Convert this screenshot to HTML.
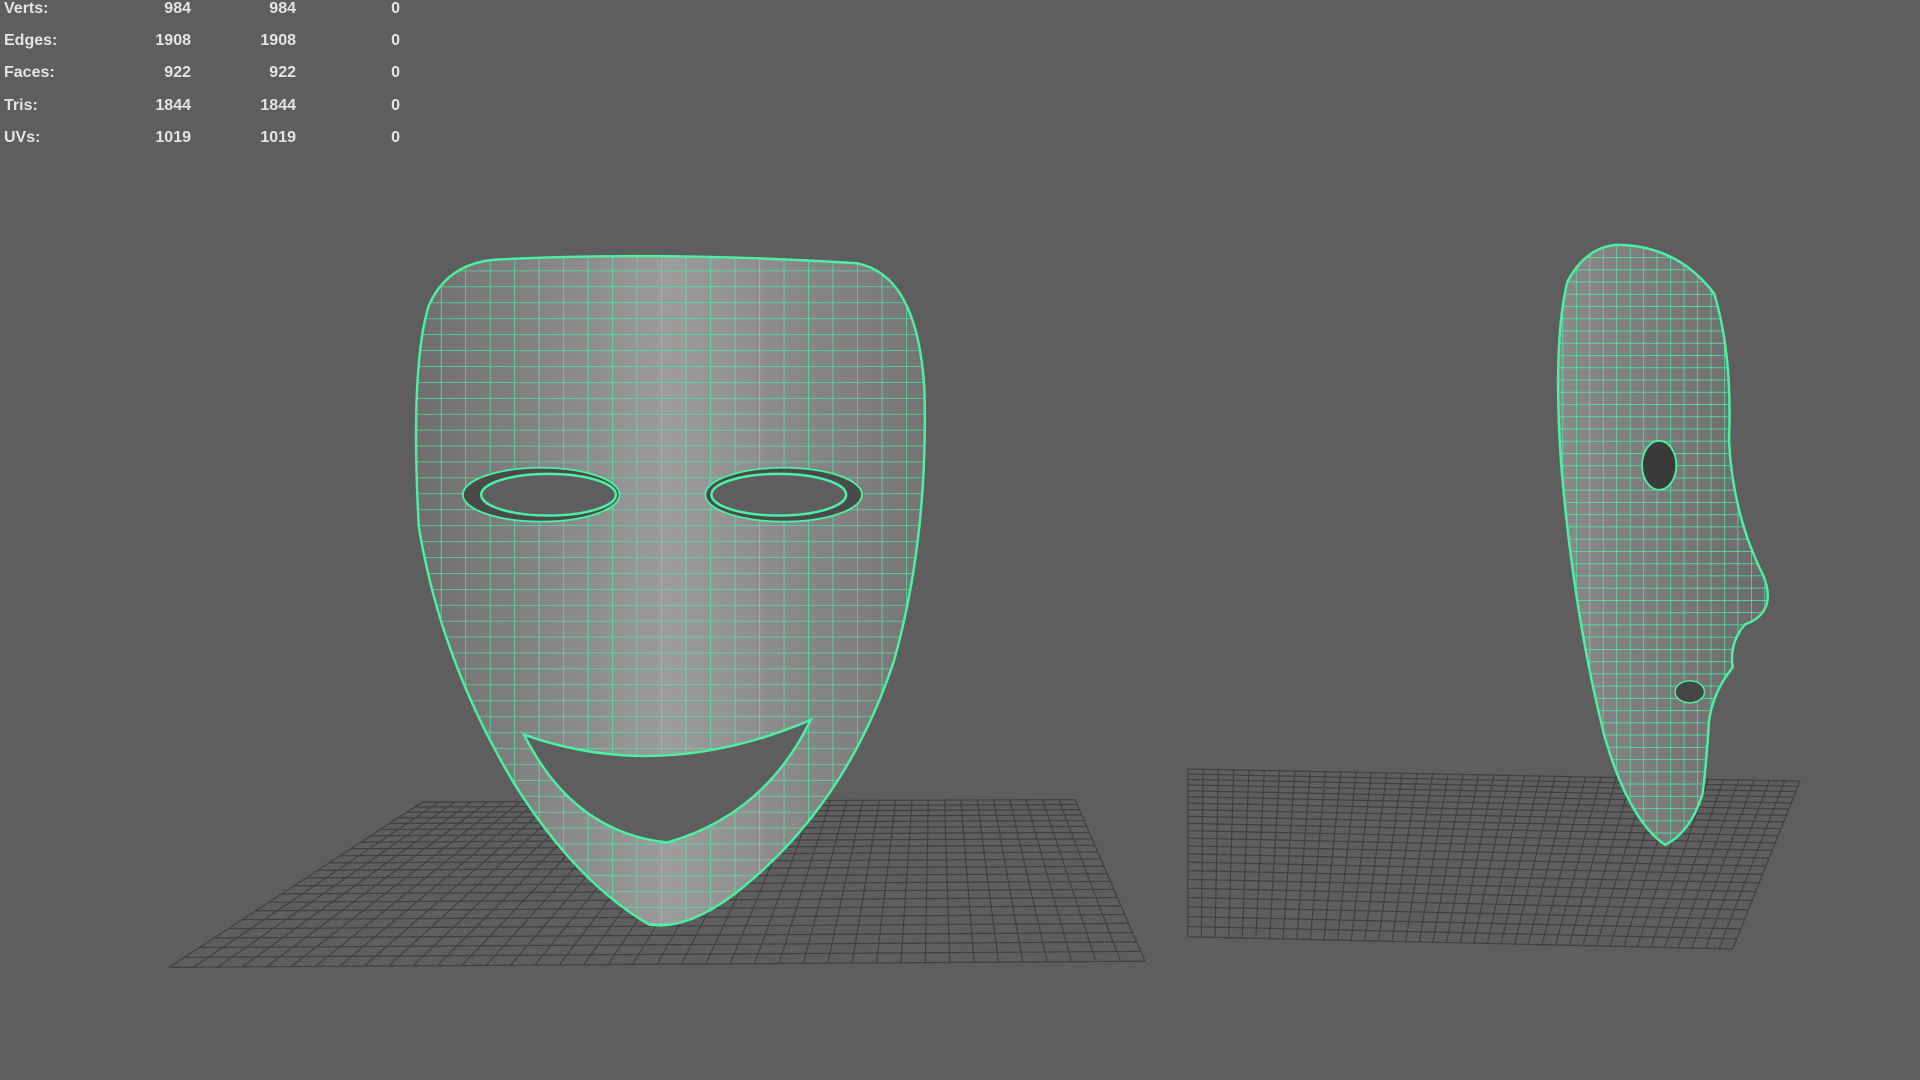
<!DOCTYPE html>
<html><head><meta charset="utf-8">
<style>
html,body{margin:0;padding:0;width:1920px;height:1080px;overflow:hidden;background:#5e5e5e;}
#stats{position:absolute;left:0;top:2px;font-family:"Liberation Sans",sans-serif;font-weight:bold;font-size:16px;color:#e4e4e4;}
.r{position:absolute;height:20px;white-space:nowrap;}
.r span{position:absolute;}
.l{left:4px;}
.a{position:absolute;text-align:right;width:80px;}
svg{position:absolute;left:0;top:0;}
</style></head><body>
<svg id="sv" width="1920" height="1080" viewBox="0 0 1568 882" preserveAspectRatio="none">
<defs>
<linearGradient id="fg" x1="0" y1="0" x2="1" y2="0">
<stop offset="0" stop-color="#6e6e6e"/><stop offset="0.5" stop-color="#9c9c9c"/><stop offset="1" stop-color="#747474"/>
</linearGradient>
<linearGradient id="sg" x1="0" y1="0" x2="1" y2="0">
<stop offset="0" stop-color="#8a8a8a"/><stop offset="1" stop-color="#6a6a6a"/>
</linearGradient>
<pattern id="wp" width="20" height="13" patternUnits="userSpaceOnUse">
<path d="M0 0H20M0 0V13" stroke="#4cf0a4" stroke-width="1.1" fill="none"/>
</pattern>
<pattern id="wp2" width="11" height="10" patternUnits="userSpaceOnUse">
<path d="M0 0H11M0 0V10" stroke="#4cf0a4" stroke-width="1.1" fill="none"/>
</pattern>
<clipPath id="fc"><path d="M405,212 Q540,205 700,215 Q750,225 755,320 Q758,440 730,540 Q690,660 600,730 Q560,760 530,755 Q470,720 420,640 Q360,540 342,430 Q335,300 350,250 Q365,215 405,212 Z"/></clipPath>
<clipPath id="sc"><path d="M1320,200 Q1370,200 1400,240 Q1415,290 1412,360 Q1415,420 1440,470 Q1452,500 1425,510 Q1412,525 1415,545 Q1395,570 1395,600 Q1392,640 1390,650 Q1380,680 1360,690 Q1330,670 1310,600 Q1285,500 1275,380 Q1268,280 1280,230 Q1295,202 1320,200 Z"/></clipPath>
</defs>
<g id="grids" stroke="#404040" stroke-width="1" fill="none"></g>
<path d="M405,212 Q540,205 700,215 Q750,225 755,320 Q758,440 730,540 Q690,660 600,730 Q560,760 530,755 Q470,720 420,640 Q360,540 342,430 Q335,300 350,250 Q365,215 405,212 Z" fill="url(#fg)"/>
<g clip-path="url(#fc)"><rect x="330" y="200" width="440" height="570" fill="url(#wp)"/></g>
<path d="M405,212 Q540,205 700,215 Q750,225 755,320 Q758,440 730,540 Q690,660 600,730 Q560,760 530,755 Q470,720 420,640 Q360,540 342,430 Q335,300 350,250 Q365,215 405,212 Z" fill="none" stroke="#4cf0a4" stroke-width="2"/>
<ellipse cx="442" cy="404" rx="64" ry="22" fill="#4a4a4a" stroke="#4cf0a4" stroke-width="1.5"/>
<ellipse cx="448" cy="404" rx="55" ry="17" fill="#5e5e5e" stroke="#4cf0a4" stroke-width="2"/>
<ellipse cx="640" cy="404" rx="64" ry="22" fill="#4a4a4a" stroke="#4cf0a4" stroke-width="1.5"/>
<ellipse cx="636" cy="404" rx="55" ry="17" fill="#5e5e5e" stroke="#4cf0a4" stroke-width="2"/>
<path d="M428,600 Q540,640 662,588 Q625,665 545,688 Q468,680 428,600 Z" fill="#5e5e5e" stroke="#4cf0a4" stroke-width="2"/>
<path d="M1320,200 Q1370,200 1400,240 Q1415,290 1412,360 Q1415,420 1440,470 Q1452,500 1425,510 Q1412,525 1415,545 Q1395,570 1395,600 Q1392,640 1390,650 Q1380,680 1360,690 Q1330,670 1310,600 Q1285,500 1275,380 Q1268,280 1280,230 Q1295,202 1320,200 Z" fill="url(#sg)"/>
<g clip-path="url(#sc)"><rect x="1260" y="195" width="200" height="500" fill="url(#wp2)"/></g>
<path d="M1320,200 Q1370,200 1400,240 Q1415,290 1412,360 Q1415,420 1440,470 Q1452,500 1425,510 Q1412,525 1415,545 Q1395,570 1395,600 Q1392,640 1390,650 Q1380,680 1360,690 Q1330,670 1310,600 Q1285,500 1275,380 Q1268,280 1280,230 Q1295,202 1320,200 Z" fill="none" stroke="#4cf0a4" stroke-width="2"/>
<ellipse cx="1355" cy="380" rx="14" ry="20" fill="#3a3a3a" stroke="#4cf0a4" stroke-width="1.5"/>
<ellipse cx="1380" cy="565" rx="12" ry="9" fill="#454545" stroke="#4cf0a4" stroke-width="1.2"/>
</svg>
<div id="stats">
<div class="r" style="top:-2px"><span class="l">Verts:</span><span class="a" style="left:111px">984</span><span class="a" style="left:216px">984</span><span class="a" style="left:320px">0</span></div>
<div class="r" style="top:30px"><span class="l">Edges:</span><span class="a" style="left:111px">1908</span><span class="a" style="left:216px">1908</span><span class="a" style="left:320px">0</span></div>
<div class="r" style="top:62px"><span class="l">Faces:</span><span class="a" style="left:111px">922</span><span class="a" style="left:216px">922</span><span class="a" style="left:320px">0</span></div>
<div class="r" style="top:95px"><span class="l">Tris:</span><span class="a" style="left:111px">1844</span><span class="a" style="left:216px">1844</span><span class="a" style="left:320px">0</span></div>
<div class="r" style="top:127px"><span class="l">UVs:</span><span class="a" style="left:111px">1019</span><span class="a" style="left:216px">1019</span><span class="a" style="left:320px">0</span></div>
</div>
<script>
(function(){
var g=document.getElementById('grids'),ns='http://www.w3.org/2000/svg';
function L(x1,y1,x2,y2){var l=document.createElementNS(ns,'line');l.setAttribute('x1',x1);l.setAttribute('y1',y1);l.setAttribute('x2',x2);l.setAttribute('y2',y2);g.appendChild(l);}
function lerp(a,b,t){return [a[0]+(b[0]-a[0])*t,a[1]+(b[1]-a[1])*t];}
function grid(A,B,C,D,nu,nv){
for(var i=0;i<=nu;i++){var t=i/nu,p=lerp(A,B,t),q=lerp(D,C,t);L(p[0],p[1],q[0],q[1]);}
for(var j=0;j<=nv;j++){var s=j/nv;s=s*s*0.35+s*0.65;var p=lerp(A,D,s),q=lerp(B,C,s);L(p[0],p[1],q[0],q[1]);}
}
grid([345,655],[878,653],[935,785],[138,790],40,22);
grid([970,628],[1470,638],[1415,775],[970,765],40,22);
})();
</script>
</body></html>
